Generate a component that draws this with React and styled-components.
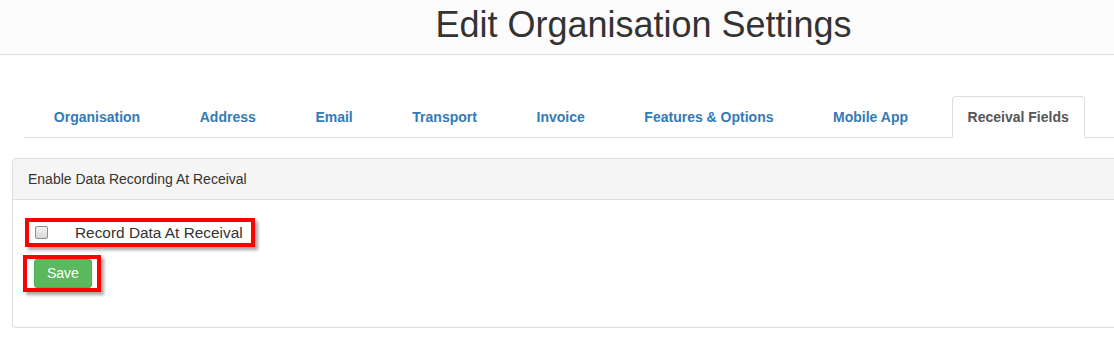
import React from 'react';
import styled, { createGlobalStyle } from 'styled-components';

const GlobalStyle = createGlobalStyle`
  body {
    margin: 0;
    background: #fff;
    color: #333;
    font-family: "Liberation Sans", Arial, sans-serif;
    font-size: 14px;
    overflow: hidden;
  }
`

const Page = styled.div`
  width: 1114px;
  overflow: hidden;
`

const Header = styled.header`
  background-color: #fcfcfc;
  border-bottom: 1px solid #e0e0e0;
  padding: 5px 0 9px 173px;
  text-align: center;
`

const Title = styled.h1`
  margin: 0;
  font-size: 36px;
  font-weight: 400;
  line-height: 40px;
  color: #333;
`

const Tabs = styled.ul`
  display: flex;
  list-style: none;
  margin: 41px -40px 0 24px;
  padding: 0;
  border-bottom: 1px solid #ddd;
`

const TabItem = styled.li`
  margin: 0 13.8px -1px;
`

const TabLink = styled.a`
  display: block;
  padding: 10px 15px;
  line-height: 20px;
  font-weight: bold;
  text-decoration: none;
  border: 1px solid ${props => props.$active ? '#ddd' : 'transparent'};
  border-bottom-color: ${props => props.$active ? '#fff' : 'transparent'};
  border-radius: 4px 4px 0 0;
  background: ${props => props.$active ? '#fff' : 'transparent'};
  color: ${props => props.$active ? '#555' : '#337ab7'};
  cursor: ${props => props.$active ? 'default' : 'pointer'};
`

const Panel = styled.section`
  margin: 20px -40px 0 12px;
  border: 1px solid #ddd;
  border-radius: 4px;
  background: #fff;
`

const PanelHeading = styled.div`
  padding: 10px 15px;
  line-height: 20px;
  background-color: #f5f5f5;
  border-bottom: 1px solid #ddd;
  border-radius: 3px 3px 0 0;
  color: #333;
`

const PanelBody = styled.div`
  display: flex;
  flex-direction: column;
  align-items: flex-start;
  gap: 8px;
  padding: 18px 10px 35px;
`

// red annotation frame drawn around the highlighted controls
const Highlight = styled.div`
  display: flex;
  align-items: center;
  margin-left: ${props => props.$inset || 0}px;
  padding: ${props => props.$pad};
  border: 4px solid #f00;
  background: #fff;
  box-shadow: 3px 3px 3px rgba(0, 0, 0, 0.35);
`

const CheckLabel = styled.label`
  display: flex;
  align-items: center;
  gap: 27px;
  font-size: 15.4px;
  line-height: 21px;
  color: #333;
`

const Checkbox = styled.input`
  appearance: none;
  width: 13px;
  height: 13px;
  margin: 0;
  border: 1px solid #8e8e8e;
  border-radius: 2px;
  background: linear-gradient(#f2f2f2, #d9d9d9);
`

const SaveButton = styled.button`
  height: 29px;
  padding: 0 12px;
  font-family: "Liberation Sans", Arial, sans-serif;
  font-size: 14px;
  line-height: 27px;
  color: #fff;
  background-color: #5cb85c;
  border: 1px solid #4cae4c;
  border-radius: 3px;
  cursor: pointer;
`

const tabs = [
  'Organisation',
  'Address',
  'Email',
  'Transport',
  'Invoice',
  'Features & Options',
  'Mobile App',
  'Receival Fields',
];

export default () => {
  return (
    <Page>
      <GlobalStyle />
      <Header>
        <Title>Edit Organisation Settings</Title>
      </Header>
      <Tabs>
        {tabs.map(t => (
          <TabItem key={t}>
            <TabLink $active={t === 'Receival Fields'}>{t}</TabLink>
          </TabItem>
        ))}
      </Tabs>
      <Panel>
        <PanelHeading>Enable Data Recording At Receival</PanelHeading>
        <PanelBody>
          <Highlight $inset={2} $pad="0 8px 0 6px">
            <CheckLabel>
              <Checkbox type="checkbox" />
              Record Data At Receival
            </CheckLabel>
          </Highlight>
          <Highlight $pad="0 5px 0 7px">
            <SaveButton>Save</SaveButton>
          </Highlight>
        </PanelBody>
      </Panel>
    </Page>
  )
}
